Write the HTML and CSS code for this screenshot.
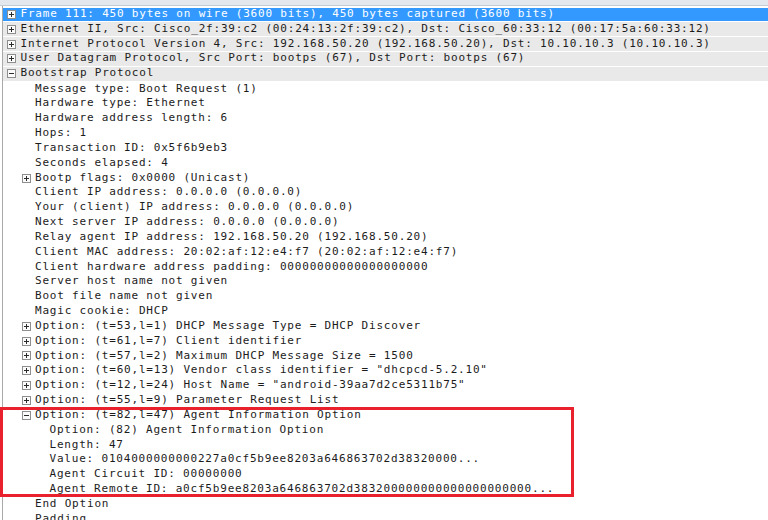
FILE: index.html
```html
<!DOCTYPE html>
<html>
  <head>
    <title>Bootstrap Protocol</title>
    <meta charset="utf-8" />
    <link rel="stylesheet" href="styles.css">
  </head>
  <body>
    <div class="topbar"></div>
    <div class="tree">
      <div class="row top selected"><span class="exp plus"></span>Frame 111: 450 bytes on wire (3600 bits), 450 bytes captured (3600 bits)</div>
      <div class="row top"><span class="exp plus"></span>Ethernet II, Src: Cisco_2f:39:c2 (00:24:13:2f:39:c2), Dst: Cisco_60:33:12 (00:17:5a:60:33:12)</div>
      <div class="row top"><span class="exp plus"></span>Internet Protocol Version 4, Src: 192.168.50.20 (192.168.50.20), Dst: 10.10.10.3 (10.10.10.3)</div>
      <div class="row top"><span class="exp plus"></span>User Datagram Protocol, Src Port: bootps (67), Dst Port: bootps (67)</div>
      <div class="row top"><span class="exp minus"></span>Bootstrap Protocol</div>

      <div class="row l1"><span class="exp none"></span>Message type: Boot Request (1)</div>
      <div class="row l1"><span class="exp none"></span>Hardware type: Ethernet</div>
      <div class="row l1"><span class="exp none"></span>Hardware address length: 6</div>
      <div class="row l1"><span class="exp none"></span>Hops: 1</div>
      <div class="row l1"><span class="exp none"></span>Transaction ID: 0x5f6b9eb3</div>
      <div class="row l1"><span class="exp none"></span>Seconds elapsed: 4</div>
      <div class="row l1"><span class="exp plus"></span>Bootp flags: 0x0000 (Unicast)</div>
      <div class="row l1"><span class="exp none"></span>Client IP address: 0.0.0.0 (0.0.0.0)</div>
      <div class="row l1"><span class="exp none"></span>Your (client) IP address: 0.0.0.0 (0.0.0.0)</div>
      <div class="row l1"><span class="exp none"></span>Next server IP address: 0.0.0.0 (0.0.0.0)</div>
      <div class="row l1"><span class="exp none"></span>Relay agent IP address: 192.168.50.20 (192.168.50.20)</div>
      <div class="row l1"><span class="exp none"></span>Client MAC address: 20:02:af:12:e4:f7 (20:02:af:12:e4:f7)</div>
      <div class="row l1"><span class="exp none"></span>Client hardware address padding: 00000000000000000000</div>
      <div class="row l1"><span class="exp none"></span>Server host name not given</div>
      <div class="row l1"><span class="exp none"></span>Boot file name not given</div>
      <div class="row l1"><span class="exp none"></span>Magic cookie: DHCP</div>
      <div class="row l1"><span class="exp plus"></span>Option: (t=53,l=1) DHCP Message Type = DHCP Discover</div>
      <div class="row l1"><span class="exp plus"></span>Option: (t=61,l=7) Client identifier</div>
      <div class="row l1"><span class="exp plus"></span>Option: (t=57,l=2) Maximum DHCP Message Size = 1500</div>
      <div class="row l1"><span class="exp plus"></span>Option: (t=60,l=13) Vendor class identifier = "dhcpcd-5.2.10"</div>
      <div class="row l1"><span class="exp plus"></span>Option: (t=12,l=24) Host Name = "android-39aa7d2ce5311b75"</div>
      <div class="row l1"><span class="exp plus"></span>Option: (t=55,l=9) Parameter Request List</div>
      <div class="row l1"><span class="exp minus"></span>Option: (t=82,l=47) Agent Information Option</div>
      <div class="row l2"><span class="exp none"></span>Option: (82) Agent Information Option</div>
      <div class="row l2"><span class="exp none"></span>Length: 47</div>
      <div class="row l2"><span class="exp none"></span>Value: 0104000000000227a0cf5b9ee8203a646863702d38320000...</div>
      <div class="row l2"><span class="exp none"></span>Agent Circuit ID: 00000000</div>
      <div class="row l2"><span class="exp none"></span>Agent Remote ID: a0cf5b9ee8203a646863702d383200000000000000000000...</div>
      <div class="row l1"><span class="exp none"></span>End Option</div>
      <div class="row l1"><span class="exp none"></span>Padding</div>

      <div class="mark"></div>
    </div>
  </body>
</html>
```

FILE: styles.css
```css
body {
  margin: 0;
  background: #fff;
  overflow: hidden;
}
.topbar {
  height: 5px;
  background: #e3e8ee;
  border-bottom: 1px solid #c4cbd3;
}
.tree {
  position: relative;
  margin-left: 2px;
  padding-top: 1.5px;
  border-left: 1px solid #a9a9a9;
  height: 520px;
  font-family: "DejaVu Sans Mono", "Liberation Mono", monospace;
  font-size: 11px;
  letter-spacing: 0.8px;
  color: #1c1c1c;
}
.row {
  display: flex;
  align-items: center;
  height: 14.83px;
  line-height: 14.83px;
  white-space: nowrap;
  padding-left: 4px;
}
.top {
  background: #e9e9e9;
  border-bottom: 1px solid #fff;
  box-sizing: border-box;
}
.selected {
  background: #3399ff;
  color: #fff;
}
.l1 {
  padding-left: 18.5px;
}
.l2 {
  padding-left: 33px;
}
.exp {
  position: relative;
  flex: none;
  width: 7px;
  height: 7px;
  margin-right: 4.5px;
  border: 1px solid #8e8e8e;
  background: #fbfbfb;
}
.exp.none {
  visibility: hidden;
}
.exp::before {
  content: "";
  position: absolute;
  left: 1px;
  top: 3px;
  width: 5px;
  height: 1px;
  background: #2b2b2b;
}
.plus::after {
  content: "";
  position: absolute;
  left: 3px;
  top: 1px;
  width: 1px;
  height: 5px;
  background: #2b2b2b;
}
.mark {
  position: absolute;
  left: -3px;
  top: 401px;
  width: 568px;
  height: 84px;
  border: 3px solid #e8212c;
}
```
